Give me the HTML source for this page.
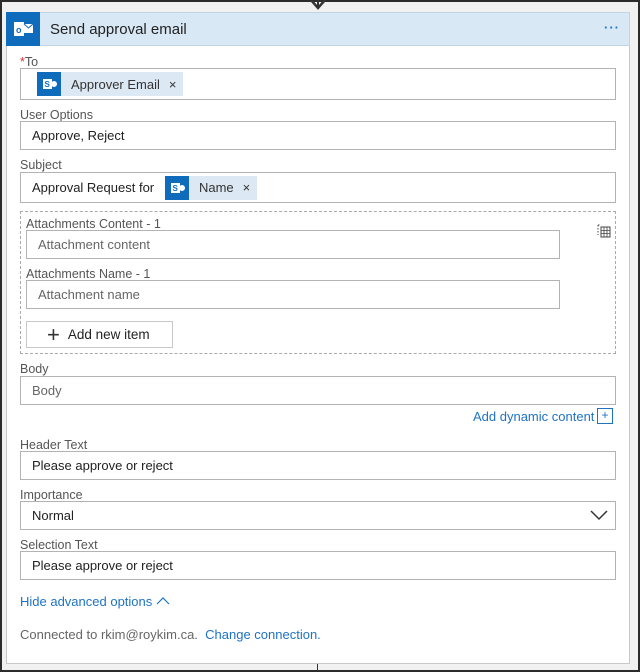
<!DOCTYPE html>
<html><head><meta charset="utf-8"><style>
*{box-sizing:border-box;margin:0;padding:0}
body{width:640px;height:672px;background:#f1f1f1;position:relative;overflow:hidden;font-family:"Liberation Sans",sans-serif;font-size:13px;color:#333}
.frame{position:absolute;left:0;top:0;width:640px;height:672px;border:2px solid #2b2b2b;pointer-events:none}
.card{position:absolute;left:6px;top:12px;width:624px;height:652px;background:#fff;border:1px solid #c8c8c8}
.hdr{position:absolute;left:6px;top:12px;width:624px;height:34px;background:#d8e8f5;border:1px solid #c0d4e4}
.ico{position:absolute;left:6px;top:12px;width:34px;height:34px;background:#0f6cbd}
.lbl{position:absolute;left:20px;font-size:12.5px;color:#555}
.box{position:absolute;left:20px;width:596px;border:1px solid #b3b3b3;background:#fff;font-size:13px;color:#222;padding-left:11px;display:flex;align-items:center}
.ph{color:#666}
.tok{display:inline-flex;align-items:center;background:#dce8f4;height:24px;font-size:13px;color:#333}
.tok .s{width:24px;height:24px;background:#0f6cbd;position:relative;margin-right:10px}
.link{color:#1f73c4;position:absolute}
</style></head><body>
<div class="card"></div>
<div class="hdr"></div>
<div class="ico"><svg width="34" height="34"><rect x="8" y="10" width="10" height="14" fill="#fff"/><text x="10" y="21" font-size="9" font-weight="bold" fill="#0f6cbd" font-family="Liberation Sans">o</text><rect x="18" y="12" width="9" height="9" fill="#fff"/><path d="M18 12 L22.5 16 L27 12" stroke="#0f6cbd" fill="none"/></svg></div>
<div style="position:absolute;left:50px;top:21px;font-size:15px;color:#222">Send approval email</div>
<div style="position:absolute;left:604px;top:20px;font-size:13px;font-weight:bold;color:#1f73c4;letter-spacing:1px">&middot;&middot;&middot;</div>

<div class="lbl" style="top:55px"><span style="color:#d13438">*</span>To</div>
<div class="box" style="top:68px;height:32px;padding-left:16px"><span class="tok"><span class="s"><svg width="24" height="24"><rect x="6" y="7" width="9" height="10" fill="#fff"/><text x="7.5" y="15" font-size="8" font-weight="bold" fill="#0f6cbd">S</text><circle cx="17" cy="12" r="3" fill="#fff"/></svg></span>Approver Email<span style="margin:0 7px 0 9px">&times;</span></span></div>

<div class="lbl" style="top:108px">User Options</div>
<div class="box" style="top:121px;height:29px">Approve, Reject</div>

<div class="lbl" style="top:158px">Subject</div>
<div class="box" style="top:172px;height:31px">Approval Request for&nbsp;&nbsp;&nbsp;<span class="tok"><span class="s"><svg width="24" height="24"><rect x="6" y="7" width="9" height="10" fill="#fff"/><text x="7.5" y="15" font-size="8" font-weight="bold" fill="#0f6cbd">S</text><circle cx="17" cy="12" r="3" fill="#fff"/></svg></span>Name<span style="margin:0 7px 0 9px">&times;</span></span></div>

<div style="position:absolute;left:20px;top:211px;width:596px;height:143px;border:1px dashed #aaa"></div>
<svg style="position:absolute;left:596px;top:222px" width="18" height="18"><rect x="5" y="5" width="9" height="10" fill="none" stroke="#444"/><path d="M5 8.5h9M5 11.5h9M8 5v10M11 5v10" stroke="#444" stroke-width=".8"/><path d="M2 3h3M2 3v10" stroke="#444" stroke-dasharray="1.5 1.5"/></svg>
<div class="lbl" style="top:217px;left:26px">Attachments Content - 1</div>
<div class="box ph" style="top:230px;left:26px;width:534px;height:29px">Attachment content</div>
<div class="lbl" style="top:267px;left:26px">Attachments Name - 1</div>
<div class="box ph" style="top:280px;left:26px;width:534px;height:29px">Attachment name</div>
<div class="box" style="top:321px;left:26px;width:147px;height:27px;border-color:#c8c8c8;padding-left:20px;font-size:13.5px"><span style="font-size:22px;font-weight:200;margin-right:8px;color:#333">+</span>Add new item</div>

<div class="lbl" style="top:362px">Body</div>
<div class="box ph" style="top:376px;height:29px">Body</div>
<div class="link" style="left:473px;top:409px;font-size:13px">Add dynamic content</div>
<div style="position:absolute;left:597px;top:408px;width:16px;height:16px;border:1px solid #1f73c4;color:#1f73c4;font-size:12px;line-height:13px;text-align:center">+</div>

<div class="lbl" style="top:438px">Header Text</div>
<div class="box" style="top:451px;height:29px">Please approve or reject</div>
<div class="lbl" style="top:488px">Importance</div>
<div class="box" style="top:501px;height:29px">Normal</div>
<svg style="position:absolute;left:589px;top:509px" width="20" height="12"><path d="M2 2 L10 10 L18 2" fill="none" stroke="#333" stroke-width="1.5"/></svg>
<div class="lbl" style="top:538px">Selection Text</div>
<div class="box" style="top:551px;height:29px">Please approve or reject</div>

<div class="link" style="left:20px;top:594px">Hide advanced options <svg width="14" height="10"><path d="M1 8 L7 2 L13 8" fill="none" stroke="#1f73c4" stroke-width="1.2"/></svg></div>
<div style="position:absolute;left:20px;top:627px;color:#666">Connected to rkim@roykim.ca.&nbsp;&nbsp;<span style="color:#1f73c4">Change connection.</span></div>
<div style="position:absolute;left:317px;top:664px;width:1px;height:8px;background:#333"></div>
<div class="frame"></div>
<svg style="position:absolute;left:308px;top:0" width="20" height="12"><path d="M3 0 L10 8 L17 0" fill="none" stroke="#333" stroke-width="2.5"/><line x1="10" y1="0" x2="10" y2="8" stroke="#333" stroke-width="2"/></svg>
</body></html>
